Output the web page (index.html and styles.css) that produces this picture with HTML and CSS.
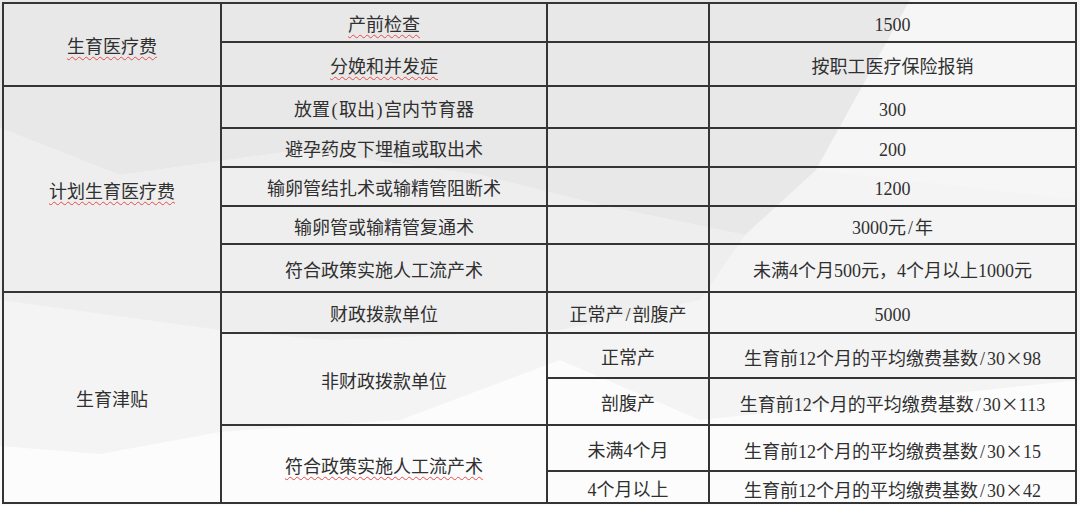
FILE: index.html
```html
<!DOCTYPE html>
<html lang="zh-CN">
<head>
<meta charset="utf-8">
<title>生育保险待遇</title>
<link rel="stylesheet" href="styles.css">
</head>
<body>
<div class="page">
<table class="tbl">
<colgroup><col class="c1"><col class="c2"><col class="c3"><col class="c4"></colgroup>
<tr class="r1"><td rowspan="2"><span class="sp">生育医疗费</span></td><td><span class="sp">产前检查</span></td><td></td><td>1500</td></tr>
<tr class="r2"><td><span class="sp">分娩和并发症</span></td><td></td><td>按职工医疗保险报销</td></tr>
<tr class="r3"><td rowspan="5"><span class="sp">计划生育医疗费</span></td><td>放置<span class="h">(</span>取出<span class="h">)</span>宫内节育器</td><td></td><td>300</td></tr>
<tr class="r4"><td>避孕药皮下埋植或取出术</td><td></td><td>200</td></tr>
<tr class="r5"><td>输卵管结扎术或输精管阻断术</td><td></td><td>1200</td></tr>
<tr class="r6"><td>输卵管或输精管复通术</td><td></td><td>3000元<span class="h">/</span>年</td></tr>
<tr class="r7"><td>符合政策实施人工流产术</td><td></td><td>未满4个月500元，4个月以上1000元</td></tr>
<tr class="r8"><td rowspan="5">生育津贴</td><td>财政拨款单位</td><td>正常产<span class="h">/</span>剖腹产</td><td>5000</td></tr>
<tr class="r9"><td rowspan="2">非财政拨款单位</td><td>正常产</td><td>生育前12个月的平均缴费基数<span class="h">/</span>30<span class="x">×</span>98</td></tr>
<tr class="r10"><td>剖腹产</td><td>生育前12个月的平均缴费基数<span class="h">/</span>30<span class="x">×</span>113</td></tr>
<tr class="r11"><td rowspan="2"><span class="sp">符合政策实施人工流产术</span></td><td>未满4个月</td><td>生育前12个月的平均缴费基数<span class="h">/</span>30<span class="x">×</span>15</td></tr>
<tr class="r12"><td>4个月以上</td><td>生育前12个月的平均缴费基数<span class="h">/</span>30<span class="x">×</span>42</td></tr>
</table>
</div>
</body>
</html>
```

FILE: styles.css
```css
html, body {
  margin: 0;
  padding: 0;
  background: #f5f5f5;
}

.page {
  width: 1080px;
  height: 506px;
  box-sizing: border-box;
  padding: 2px 0 0 2px;
  background-color: #f5f5f5;
  background-image: url("data:image/svg+xml;utf8,<svg xmlns='http://www.w3.org/2000/svg' width='1080' height='506' viewBox='0 0 1080 506'><rect width='1080' height='506' fill='%23f4f4f4'/><polygon points='0,0 910,0 816,170 745,235 600,205 480,175 300,150 120,175 0,128' fill='%23e8e8e8'/><polygon points='0,128 120,175 300,150 480,175 600,205 745,235 700,300 560,330 330,340 220,330 0,300' fill='%23eeeeee'/><polygon points='910,0 1080,0 1080,200 816,170' fill='%23f6f6f6'/><polygon points='0,446 100,454 220,432 400,420 560,360 700,420 1080,380 1080,506 0,506' fill='%23fcfcfc'/></svg>");
  background-repeat: no-repeat;
  font-family: "Liberation Serif", "Noto Sans CJK SC", serif;
  font-size: 18px;
  color: #303030;
}

.tbl {
  border-collapse: collapse;
  table-layout: fixed;
  width: 1073px;
  border: 2px solid #555555;
}

.c1 { width: 218px; }
.c2 { width: 326px; }
.c3 { width: 162px; }
.c4 { width: 367px; }

.tbl td {
  border: 2px solid #353535;
  padding: 5px 0 0 0;
  text-align: center;
  vertical-align: middle;
  line-height: 20px;
  white-space: nowrap;
  background: transparent;
}

.r1 { height: 39px; }
.r2 { height: 44px; }
.r3 { height: 42px; }
.r4 { height: 39px; }
.r5 { height: 39px; }
.r6 { height: 38px; }
.r7 { height: 48px; }
.r8 { height: 41px; }
.r9 { height: 45px; }
.r10 { height: 47px; }
.r11 { height: 46px; }
.r12 { height: 32px; }

.sp {
  text-decoration: underline wavy #e84a4a;
  text-decoration-thickness: 1px;
  text-underline-offset: 3px;
}

.h {
  display: inline-block;
  width: 9px;
  text-align: center;
}

.x {
  font-family: "Noto Sans CJK SC", sans-serif;
  font-feature-settings: "fwid";
}
```
